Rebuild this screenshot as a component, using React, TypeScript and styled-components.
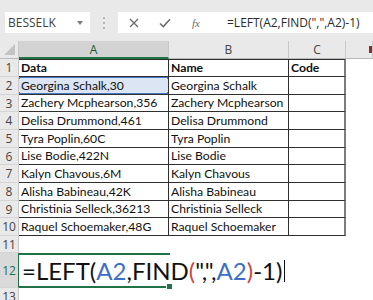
import React from "react";
import styled, { createGlobalStyle } from "styled-components";

const GlobalStyle = createGlobalStyle`
  body {
    margin: 0;
    background: #ffffff;
    overflow: hidden;
  }
`;

const Sheet = styled.div`
  width: 373px;
  height: 300px;
  overflow: hidden;
  background: #ffffff;
  font-family: Lato, "Liberation Sans", sans-serif;
`;

const Toolbar = styled.div`
  height: 41px;
  box-sizing: border-box;
  padding-top: 12px;
  background: #e9e9e9;
  display: flex;
  align-items: flex-start;
`;

const NameBox = styled.div`
  margin-left: 5px;
  width: 85px;
  height: 21px;
  box-sizing: border-box;
  padding: 0 7px 0 3px;
  background: #ffffff;
  display: flex;
  align-items: center;
  justify-content: space-between;
  font: 12px "Open Sans", sans-serif;
  color: #3f3f3f;
`;

const Caret = styled.span`
  width: 0;
  height: 0;
  border-left: 3px solid transparent;
  border-right: 3px solid transparent;
  border-top: 4px solid #7a7a7a;
`;

const Dots = styled.div`
  width: 28px;
  height: 21px;
  display: flex;
  flex-direction: column;
  align-items: center;
  justify-content: center;
  gap: 3px;
  & > i {
    width: 2px;
    height: 2px;
    background: #b5b5b5;
  }
`;

const FormulaBox = styled.div`
  flex: 1;
  height: 21px;
  background: #ffffff;
  display: flex;
  align-items: center;
`;

const ToolIcon = styled.div<{ w: number }>`
  width: ${(p) => p.w}px;
  display: flex;
  justify-content: center;
  align-items: center;
  color: #6b6b6b;
`;

const Fx = styled.span`
  font: italic 11px "Liberation Serif", serif;
  color: #6b6b6b;
`;

const FormulaText = styled.div`
  margin-left: 15px;
  font: 12px "Open Sans", sans-serif;
  color: #2b2b2b;
  white-space: nowrap;
`;

const Row = styled.div<{ h: number }>`
  height: ${(p) => p.h}px;
  display: flex;
`;

const Corner = styled.div`
  width: 19px;
  box-sizing: border-box;
  background: #e9e9e9;
  border-right: 1px solid #c9c9c9;
  border-bottom: 1px solid #b9b9b9;
  display: flex;
  align-items: flex-end;
  justify-content: flex-end;
  padding: 0 3px 3px 0;
`;

const Triangle = styled.span`
  width: 0;
  height: 0;
  border-left: 11px solid transparent;
  border-bottom: 11px solid #c3c3c3;
`;

const ColHeader = styled.div<{ w: number; active?: boolean }>`
  width: ${(p) => p.w}px;
  flex: ${(p) => (p.w ? "none" : "1")};
  box-sizing: border-box;
  background: ${(p) => (p.active ? "#d3d3d3" : "#e9e9e9")};
  border-right: 1px solid #c9c9c9;
  border-bottom: ${(p) => (p.active ? "2px solid #217346" : "1px solid #b9b9b9")};
  display: flex;
  align-items: center;
  justify-content: center;
  font: 12px "Open Sans", sans-serif;
  color: ${(p) => (p.active ? "#21592f" : "#444444")};
  position: relative;
`;

const RedMark = styled.span`
  position: absolute;
  right: 0;
  top: 5px;
  width: 3px;
  height: 7px;
  background: #8e2a2a;
`;

const RowHeader = styled.div<{ active?: boolean }>`
  width: 19px;
  box-sizing: border-box;
  background: ${(p) => (p.active ? "#d9d9d9" : "#e9e9e9")};
  border-right: 1px solid ${(p) => (p.active ? "#217346" : "#c9c9c9")};
  border-bottom: 1px solid #d4d4d4;
  display: flex;
  align-items: center;
  justify-content: center;
  font: 12px "Open Sans", sans-serif;
  color: ${(p) => (p.active ? "#217346" : "#444444")};
`;

const Cell = styled.div<{ w: number; bold?: boolean; first?: boolean; last?: boolean }>`
  width: ${(p) => p.w}px;
  box-sizing: border-box;
  padding: 0 0 1px 2px;
  border-right: ${(p) => (p.last ? "2px solid #7d7d7d" : "1px solid #2f2f2f")};
  border-bottom: 1px solid #2f2f2f;
  border-top: ${(p) => (p.first ? "1px solid #2f2f2f" : "none")};
  display: flex;
  align-items: flex-end;
  font-size: 12.2px;
  font-weight: ${(p) => (p.bold ? 700 : 400)};
  color: #111111;
  white-space: nowrap;
  overflow: hidden;
  position: relative;
`;

const RefBox = styled.div`
  position: absolute;
  inset: 0 -1px 0 -1px;
  background: #dbe5f3;
  border: 1px solid #4a78c8;
  z-index: 0;
  & > i {
    position: absolute;
    width: 4px;
    height: 4px;
    background: #4a78c8;
  }
`;

const CellText = styled.span`
  position: relative;
  z-index: 1;
`;

const Blank = styled.div`
  flex: 1;
`;

const ActiveCell = styled.div`
  width: 151px;
  box-sizing: border-box;
  border-top: 2px solid #217346;
  border-bottom: 2px solid #217346;
  position: relative;
  display: flex;
  align-items: center;
  padding-left: 3px;
  overflow: visible;
`;

const Handle = styled.span`
  position: absolute;
  right: -3px;
  bottom: -4px;
  width: 5px;
  height: 5px;
  background: #217346;
  border: 1px solid #ffffff;
`;

const BigFormula = styled.div`
  font-size: 24px;
  color: #111111;
  white-space: nowrap;
  display: flex;
  align-items: center;
`;

const Ref = styled.span<{ tone: "blue" | "red" }>`
  color: ${(p) => (p.tone === "blue" ? "#3d6fc6" : "#c94848")};
`;

const Caret2 = styled.span`
  width: 1px;
  height: 22px;
  margin-left: 2px;
  background: #111111;
`;

const rows: [string, string][] = [
  ["Georgina Schalk,30", "Georgina Schalk"],
  ["Zachery Mcphearson,356", "Zachery Mcphearson"],
  ["Delisa Drummond,461", "Delisa Drummond"],
  ["Tyra Poplin,60C", "Tyra Poplin"],
  ["Lise Bodie,422N", "Lise Bodie"],
  ["Kalyn Chavous,6M", "Kalyn Chavous"],
  ["Alisha Babineau,42K", "Alisha Babineau"],
  ["Christinia Selleck,36213", "Christinia Selleck"],
  ["Raquel Schoemaker,48G", "Raquel Schoemaker"],
];

const heights = [18, 17, 18, 18, 17, 18, 18, 17, 18];

export default function App() {
  return (
    <Sheet>
      <GlobalStyle />
      <Toolbar>
        <NameBox>
          BESSELK
          <Caret />
        </NameBox>
        <Dots>
          <i />
          <i />
          <i />
        </Dots>
        <FormulaBox>
          <ToolIcon w={32}>
            <svg width="10" height="10" viewBox="0 0 10 10">
              <path d="M1 1L9 9M9 1L1 9" stroke="#6b6b6b" strokeWidth="1.3" fill="none" />
            </svg>
          </ToolIcon>
          <ToolIcon w={30}>
            <svg width="12" height="10" viewBox="0 0 12 10">
              <path d="M1 5.5L4.3 8.6L11 1.2" stroke="#6b6b6b" strokeWidth="1.5" fill="none" />
            </svg>
          </ToolIcon>
          <ToolIcon w={32}>
            <Fx>fx</Fx>
          </ToolIcon>
          <FormulaText>=LEFT(A2,FIND(",",A2)-1)</FormulaText>
        </FormulaBox>
      </Toolbar>

      <Row h={18}>
        <Corner>
          <Triangle />
        </Corner>
        <ColHeader w={150} active>
          A
        </ColHeader>
        <ColHeader w={120}>B</ColHeader>
        <ColHeader w={57}>C</ColHeader>
        <ColHeader w={0}>
          <RedMark />
        </ColHeader>
      </Row>

      <Row h={18}>
        <RowHeader>1</RowHeader>
        <Cell w={150} bold first>
          Data
        </Cell>
        <Cell w={120} bold first>
          Name
        </Cell>
        <Cell w={57} bold first last>
          Code
        </Cell>
        <Blank />
      </Row>

      {rows.map(([data, name], i) => (
        <Row h={heights[i]} key={data}>
          <RowHeader>{i + 2}</RowHeader>
          <Cell w={150}>
            {i === 0 && (
              <RefBox>
                <i style={{ left: -3, top: -3 }} />
                <i style={{ right: -3, top: -3 }} />
                <i style={{ left: -3, bottom: -3 }} />
                <i style={{ right: -3, bottom: -3 }} />
              </RefBox>
            )}
            <CellText>{data}</CellText>
          </Cell>
          <Cell w={120}>{name}</Cell>
          <Cell w={57} last />
          <Blank />
        </Row>
      ))}

      <Row h={17}>
        <RowHeader>11</RowHeader>
        <Blank />
      </Row>

      <Row h={35}>
        <RowHeader active>12</RowHeader>
        <ActiveCell>
          <BigFormula>
            =LEFT(<Ref tone="blue">A2</Ref>,FIND<Ref tone="red">(</Ref>",",<Ref tone="blue">A2</Ref>
            <Ref tone="red">)</Ref>-1)
            <Caret2 />
          </BigFormula>
          <Handle />
        </ActiveCell>
        <Blank />
      </Row>

      <Row h={18}>
        <RowHeader>13</RowHeader>
        <Blank />
      </Row>
    </Sheet>
  );
}
